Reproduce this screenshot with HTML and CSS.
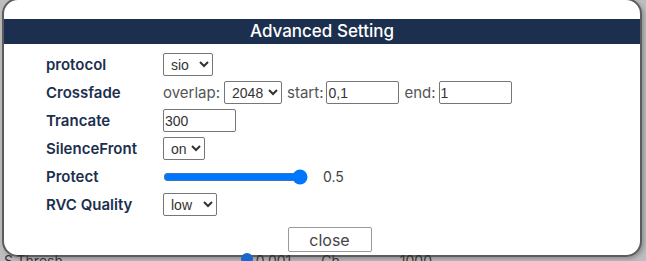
FILE: index.html
```html
<!DOCTYPE html>
<html lang="en">
  <head>
    <meta charset="UTF-8" />
    <meta name="viewport" content="width=device-width, initial-scale=1.0" />
    <title>Advanced Setting</title>
    <link rel="stylesheet" href="styles.css">
  </head>
  <body>
    <div class="dialog">
      <div class="dialog-title">Advanced Setting</div>

      <div class="settings">
        <label class="item-label">protocol</label>
        <div class="item-control">
          <select class="sel-protocol">
            <option>sio</option>
            <option>rest</option>
          </select>
        </div>

        <label class="item-label">Crossfade</label>
        <div class="item-control">
          <span class="sub-label">overlap:</span>
          <select class="sel-overlap">
            <option>2048</option>
            <option>1024</option>
          </select>
          <span class="sub-label">start:</span>
          <input type="text" class="num-input" value="0,1" />
          <span class="sub-label">end:</span>
          <input type="text" class="num-input" value="1" />
        </div>

        <label class="item-label">Trancate</label>
        <div class="item-control">
          <input type="text" class="num-input" value="300" />
        </div>

        <label class="item-label">SilenceFront</label>
        <div class="item-control">
          <select class="sel-silence">
            <option>on</option>
            <option>off</option>
          </select>
        </div>

        <label class="item-label">Protect</label>
        <div class="item-control">
          <input type="range" class="slider" min="0" max="0.5" step="0.1" value="0.5" />
          <span class="slider-value">0.5</span>
        </div>

        <label class="item-label">RVC Quality</label>
        <div class="item-control">
          <select class="sel-quality">
            <option>low</option>
            <option>high</option>
          </select>
        </div>
      </div>

      <div class="dialog-footer">
        <button class="close-btn">close</button>
      </div>
    </div>

    <!-- page behind the dialog -->
    <div class="page-row">
      <span class="page-label">S.Thresh..</span>
      <span class="page-dot"></span>
      <span class="page-value">0.001</span>
      <span class="page-label2">Ch</span>
      <span class="page-value">1000</span>
    </div>
  </body>
</html>
```

FILE: styles.css
```css
/* General styling */
body {
  margin: 0;
  background-color: #bdbdbd;
  font-family: Inter, "Open Sans", Arial, sans-serif;
  overflow: hidden;
}

.dialog {
  margin: -2px 4px 0 2px;
  height: 259px;
  box-sizing: border-box;
  background-color: #fff;
  border: 2px solid #5c5c5c;
  border-radius: 16px;
  box-shadow: 2px 2px 4px rgba(0, 0, 0, 0.25);
  padding-top: 19px;
}

.dialog-title {
  background-color: #1c2f4e;
  color: #fff;
  text-align: center;
  font-size: 17px;
  font-weight: 500;
  height: 25px;
  line-height: 25px;
}

/* Settings grid */
.settings {
  display: grid;
  grid-template-columns: 117px 1fr;
  grid-auto-rows: 23px;
  row-gap: 5px;
  padding: 9px 0 0 42px;
  align-items: center;
}

.item-label {
  font-size: 15px;
  font-weight: 600;
  color: #1c2f4e;
}

.item-control {
  display: flex;
  align-items: center;
  height: 23px;
}

.sub-label {
  font-size: 15px;
  color: #555;
  margin-right: 1px;
}

select,
input[type="text"] {
  font-family: "Liberation Sans", Arial, sans-serif;
  font-size: 14px;
  color: #333;
  height: 23px;
  box-sizing: border-box;
  border: 1px solid #767676;
  border-radius: 2px;
  background-color: #fff;
}

select {
  padding: 0 0 0 3px;
}

.sel-protocol {
  width: 50px;
}

.sel-overlap {
  width: 58px;
  margin: 0 5px 0 3px;
}

.sel-silence {
  width: 42px;
}

.sel-quality {
  width: 54px;
}

.num-input {
  width: 73px;
  padding: 0 1px;
  margin-right: 5px;
}

.sub-label + .num-input {
  margin-left: 2px;
}

.slider {
  width: 145px;
  margin: 0;
  accent-color: #0075ff;
}

.slider-value {
  margin-left: 15px;
  font-size: 14px;
  color: #444;
}

/* Footer */
.dialog-footer {
  display: flex;
  justify-content: center;
  padding: 11px 0 0 15px;
}

.close-btn {
  width: 84px;
  height: 25px;
  background-color: #fff;
  border: 1px solid #999;
  border-radius: 2px;
  font-family: Inter, "Open Sans", Arial, sans-serif;
  font-size: 16px;
  color: #444;
  padding: 0;
}

/* Page behind */
.page-row {
  display: flex;
  align-items: flex-start;
  padding: 0 0 0 4px;
  height: 8px;
  font-size: 14px;
  line-height: 8px;
  color: #333;
}

.page-label {
  margin-right: 170px;
}

.page-dot {
  width: 12px;
  height: 12px;
  margin: -4px 3px 0 0;
  border-radius: 50%;
  background-color: #1a66cc;
}

.page-label2 {
  margin-right: 60px;
}

.page-value {
  margin-right: 30px;
}
```
